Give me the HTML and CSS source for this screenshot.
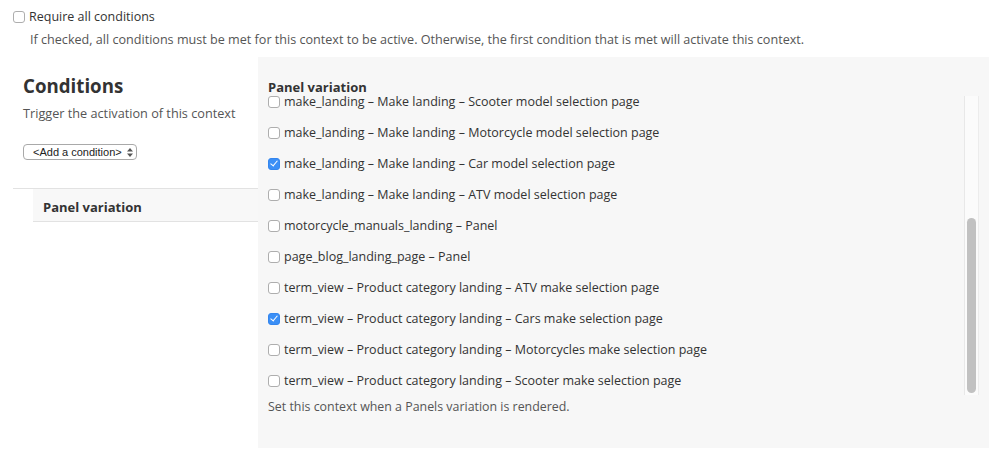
FILE: index.html
```html
<!DOCTYPE html>
<html>
<head>
<meta charset="utf-8">
<link rel="stylesheet" href="styles.css">
</head>
<body>
<div class="top">
  <label class="req"><input type="checkbox" class="cb"><span>Require all conditions</span></label>
  <div class="req-desc">If checked, all conditions must be met for this context to be active. Otherwise, the first condition that is met will activate this context.</div>
</div>
<div class="main">
  <div class="left">
    <div class="cond-head">
      <h2>Conditions</h2>
      <div class="hint">Trigger the activation of this context</div>
      <div class="sel-wrap">
        <select class="sel"><option>&lt;Add a condition&gt;</option></select>
        <svg class="sel-arrows" width="6" height="9" viewBox="0 0 6 9"><path d="M3 0 L6 3.5 H0 Z M3 9 L6 5.5 H0 Z" fill="#555"/></svg>
      </div>
    </div>
    <div class="tabs">
      <div class="tab">Panel variation</div>
    </div>
  </div>
  <div class="panel">
    <div class="panel-title">Panel variation</div>
    <div class="list">
      <div class="list-items">
        <label class="item"><input type="checkbox" class="cb"><span>make_landing – Make landing – Scooter model selection page</span></label>
        <label class="item"><input type="checkbox" class="cb"><span>make_landing – Make landing – Motorcycle model selection page</span></label>
        <label class="item"><input type="checkbox" class="cb" checked><span>make_landing – Make landing – Car model selection page</span></label>
        <label class="item"><input type="checkbox" class="cb"><span>make_landing – Make landing – ATV model selection page</span></label>
        <label class="item"><input type="checkbox" class="cb"><span>motorcycle_manuals_landing – Panel</span></label>
        <label class="item"><input type="checkbox" class="cb"><span>page_blog_landing_page – Panel</span></label>
        <label class="item"><input type="checkbox" class="cb"><span>term_view – Product category landing – ATV make selection page</span></label>
        <label class="item"><input type="checkbox" class="cb" checked><span>term_view – Product category landing – Cars make selection page</span></label>
        <label class="item"><input type="checkbox" class="cb"><span>term_view – Product category landing – Motorcycles make selection page</span></label>
        <label class="item"><input type="checkbox" class="cb"><span>term_view – Product category landing – Scooter make selection page</span></label>
      </div>
      <div class="scroll-track"><div class="scroll-thumb"></div></div>
    </div>
    <div class="panel-desc">Set this context when a Panels variation is rendered.</div>
  </div>
</div>
</body>
</html>
```
FILE: styles.css
```css
html, body {
  margin: 0;
  padding: 0;
  background: #fff;
}
body {
  font-family: "Lucida Grande", "Open Sans", sans-serif;
  color: #333;
  font-size: 12.5px;
}
.top {
  padding: 10px 13px 0;
}
.req {
  display: flex;
  align-items: center;
  height: 14px;
  line-height: 14px;
  font-size: 12.5px;
  color: #333;
}
.cb {
  -webkit-appearance: none;
  appearance: none;
  flex: none;
  width: 12px;
  height: 12px;
  margin: 0 4px 0 0;
  box-sizing: border-box;
  border: 1px solid #aeaeae;
  border-radius: 3px;
  background: #fff;
  position: relative;
}
.cb:checked {
  background: #3b8ff6;
  border-color: #3486ee;
}
.cb:checked::after {
  content: "";
  position: absolute;
  left: 3px;
  top: 0.5px;
  width: 3px;
  height: 6px;
  border: solid #fff;
  border-width: 0 1.6px 1.6px 0;
  transform: rotate(40deg);
}
.req-desc {
  margin-top: 9px;
  padding-left: 17px;
  line-height: 14px;
  font-size: 12.6px;
  color: #555;
}
.main {
  display: flex;
  margin-top: 10px;
  height: 391px;
}
.left {
  flex: 0 0 258px;
  box-sizing: border-box;
  padding-left: 13px;
}
.cond-head {
  padding: 18px 10px 0;
}
.cond-head h2 {
  margin: 0;
  font-size: 18.7px;
  line-height: 22px;
  font-weight: bold;
  color: #333;
}
.hint {
  margin-top: 9px;
  font-size: 12.7px;
  line-height: 14px;
  color: #555;
}
.sel-wrap {
  position: relative;
  display: inline-block;
  margin-top: 24px;
  vertical-align: top;
}
.sel {
  -webkit-appearance: none;
  appearance: none;
  display: block;
  width: 114px;
  height: 16px;
  box-sizing: border-box;
  border: 1px solid #a9a9a9;
  border-radius: 4px;
  background: #fff;
  font-family: "Liberation Sans", Arial, sans-serif;
  font-size: 11px;
  line-height: 14px;
  padding: 0 14px 0 9px;
  color: #222;
  margin: 0;
}
.sel-arrows {
  position: absolute;
  right: 4px;
  top: 4px;
}
.tabs {
  margin-top: 28px;
  border-top: 1px solid #e2e2e2;
}
.tab {
  margin-left: 20px;
  height: 28px;
  line-height: 28px;
  padding: 4px 0 0 10px;
  background: #f8f8f8;
  border-bottom: 1px solid #e2e2e2;
  font-weight: bold;
  font-size: 13px;
  color: #333;
}
.panel {
  flex: 0 0 731px;
  box-sizing: border-box;
  background: #f7f7f7;
  padding: 24px 10px 0;
}
.panel-title {
  font-weight: bold;
  font-size: 13px;
  line-height: 13px;
  color: #333;
}
.list {
  display: flex;
}
.list-items {
  flex: 1;
  display: flex;
  flex-direction: column;
  gap: 16px;
  padding-bottom: 7px;
}
.item {
  display: flex;
  align-items: center;
  height: 15px;
  line-height: 15px;
  font-size: 12.5px;
  color: #333;
}
.scroll-track {
  flex: 0 0 13px;
  margin-top: 2px;
  display: flex;
  flex-direction: column;
  background: #fbfbfb;
  border-left: 1px solid #e8e8e8;
  border-right: 1px solid #ececec;
}
.scroll-thumb {
  margin: auto 2px 2px;
  height: 175px;
  background: #c1c1c1;
  border-radius: 5px;
}
.panel-desc {
  margin-top: 5px;
  font-size: 12.4px;
  line-height: 14px;
  color: #555;
}
```
